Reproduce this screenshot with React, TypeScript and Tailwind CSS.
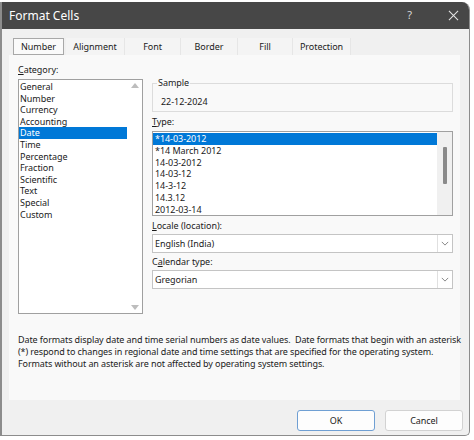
import type { ReactNode } from "react";

const categorias = [
  "General",
  "Number",
  "Currency",
  "Accounting",
  "Date",
  "Time",
  "Percentage",
  "Fraction",
  "Scientific",
  "Text",
  "Special",
  "Custom",
];

const tipos = [
  "*14-03-2012",
  "*14 March 2012",
  "14-03-2012",
  "14-03-12",
  "14-3-12",
  "14.3.12",
  "2012-03-14",
];

const pestanas = [
  { nombre: "Number", ancho: "w-[51px]" },
  { nombre: "Alignment", ancho: "w-[59px]" },
  { nombre: "Font", ancho: "w-[56px]" },
  { nombre: "Border", ancho: "w-[57px]" },
  { nombre: "Fill", ancho: "w-[55px]" },
  { nombre: "Protection", ancho: "w-[58px]" },
];

function Chevron() {
  return (
    <svg viewBox="0 0 10 6" className="h-[5px] w-[8px]" fill="none" stroke="#6b6b6b" strokeWidth={1}>
      <path d="M1 1l4 4 4-4" />
    </svg>
  );
}

function Desplegable({ valor }: { valor: string }) {
  return (
    <div className="flex h-[19px] w-[301px] items-center border border-[#c4c4c4] bg-white">
      <span className="flex-1 pl-[2px]">{valor}</span>
      <div className="flex h-full w-[15px] items-center justify-center border-l border-[#e0e0e0]">
        <Chevron />
      </div>
    </div>
  );
}

function Etiqueta({ children }: { children: ReactNode }) {
  return <div className="h-[12px] leading-[12px]">{children}</div>;
}

export default function App() {
  return (
    <div
      className="h-[440px] w-[474px] overflow-hidden bg-white text-[9px] tracking-[-0.05px] text-[#1b1b1b]"
      style={{ fontFamily: '"Noto Sans", "Liberation Sans", sans-serif' }}
    >
      <div className="mt-[2px] flex h-[434px] w-[470px] flex-col overflow-hidden rounded-tr-[8px] rounded-br-[5px] border-l-2 border-r border-b border-[#8c8c8c] bg-[#f0f0f0]">
        {/* barra de título */}
        <div className="flex h-[27px] shrink-0 items-center bg-[#474747] text-white">
          <span className="pl-[7px] text-[12px] tracking-normal">Format Cells</span>
          <span className="ml-auto mr-[36px] text-[11px] text-[#d8d8d8]">?</span>
          <svg viewBox="0 0 12 12" className="mr-[10px] h-[11px] w-[11px]" stroke="#e6e6e6" strokeWidth={1.1}>
            <path d="M1 1l10 10M11 1L1 11" />
          </svg>
        </div>

        {/* pestañas */}
        <div className="mt-[9px] flex h-[17px] pl-[9px]">
          {pestanas.map((p, i) => (
            <div
              key={p.nombre}
              className={`flex ${p.ancho} items-center justify-center ${
                i === 0
                  ? "ml-[2px] mr-[2px] border border-[#a8a8a8] bg-[#fafafa]"
                  : "border-r border-[#e6e6e6] bg-[#f4f4f4]"
              }`}
            >
              {p.nombre}
            </div>
          ))}
        </div>

        {/* panel */}
        <div className="ml-[7px] h-[345px] w-[451px] bg-[#f9f9f9] pl-[9px] pt-[9px]">
          <div className="flex">
            <div className="w-[125px]">
              <Etiqueta>
                <span className="underline">C</span>ategory:
              </Etiqueta>
              <div className="mt-[3px] flex h-[235px] border border-[#a0a0a0] bg-white">
                <div className="flex-1 pt-[1px]">
                  {categorias.map((c) => (
                    <div
                      key={c}
                      className={`h-[11.6px] pl-[1px] leading-[11.6px] ${
                        c === "Date" ? "bg-[#0078d7] text-white" : ""
                      }`}
                    >
                      {c}
                    </div>
                  ))}
                </div>
                <div className="flex w-[15px] flex-col items-center justify-between py-[3px]">
                  <svg viewBox="0 0 8 5" className="h-[5px] w-[8px]">
                    <path d="M0 5L4 0L8 5Z" fill="#bdbdbd" />
                  </svg>
                  <svg viewBox="0 0 8 5" className="h-[5px] w-[8px]">
                    <path d="M0 0L4 5L8 0Z" fill="#bdbdbd" />
                  </svg>
                </div>
              </div>
            </div>

            <div className="ml-[9px] w-[301px] pt-[19px]">
              {/* Sample */}
              <div className="relative h-[29px] border border-[#dcdcdc]">
                <span className="absolute -top-[7px] left-[4px] bg-[#f9f9f9] px-[1px] leading-[12px]">
                  Sample
                </span>
                <div className="pl-[8px] pt-[12px] leading-[12px]">22-12-2024</div>
              </div>

              <div className="mt-[4px]">
                <Etiqueta>
                  <span className="underline">T</span>ype:
                </Etiqueta>
              </div>
              <div className="mt-[3px] flex h-[85px] border border-[#a0a0a0] bg-white">
                <div className="flex-1 pt-[1px]">
                  {tipos.map((t, i) => (
                    <div
                      key={t}
                      className={`h-[11.8px] pl-[2px] leading-[11.8px] ${
                        i === 0 ? "bg-[#0078d7] text-white" : ""
                      }`}
                    >
                      {t}
                    </div>
                  ))}
                </div>
                <div className="flex w-[15px] justify-center bg-[#f0f0f0] pt-[15px]">
                  <div className="h-[37px] w-[4px] rounded-[1px] bg-[#8a8a8a]" />
                </div>
              </div>

              <div className="mt-[4px]">
                <Etiqueta>
                  <span className="underline">L</span>ocale (location):
                </Etiqueta>
              </div>
              <div className="mt-[2px]">
                <Desplegable valor="English (India)" />
              </div>

              <div className="mt-[3px]">
                <Etiqueta>
                  C<span className="underline">a</span>lendar type:
                </Etiqueta>
              </div>
              <div className="mt-[2px]">
                <Desplegable valor="Gregorian" />
              </div>
            </div>
          </div>

          <p className="mt-[20px] w-[446px] leading-[12px] tracking-[-0.1px]">
            Date formats display date and time serial numbers as date values.&nbsp; Date formats that begin with an
            asterisk (*) respond to changes in regional date and time settings that are specified for the operating
            system. Formats without an asterisk are not affected by operating system settings.
          </p>
        </div>

        {/* botones */}
        <div className="mt-[10px] flex justify-end gap-[10px] pr-[6px]">
          <button
            type="button"
            className="h-[21px] w-[78px] rounded-[3px] border border-[#6f9fd3] bg-[#fdfdfd]"
          >
            OK
          </button>
          <button
            type="button"
            className="h-[21px] w-[78px] rounded-[3px] border border-[#d2d2d2] bg-[#fdfdfd]"
          >
            Cancel
          </button>
        </div>
      </div>
    </div>
  );
}
